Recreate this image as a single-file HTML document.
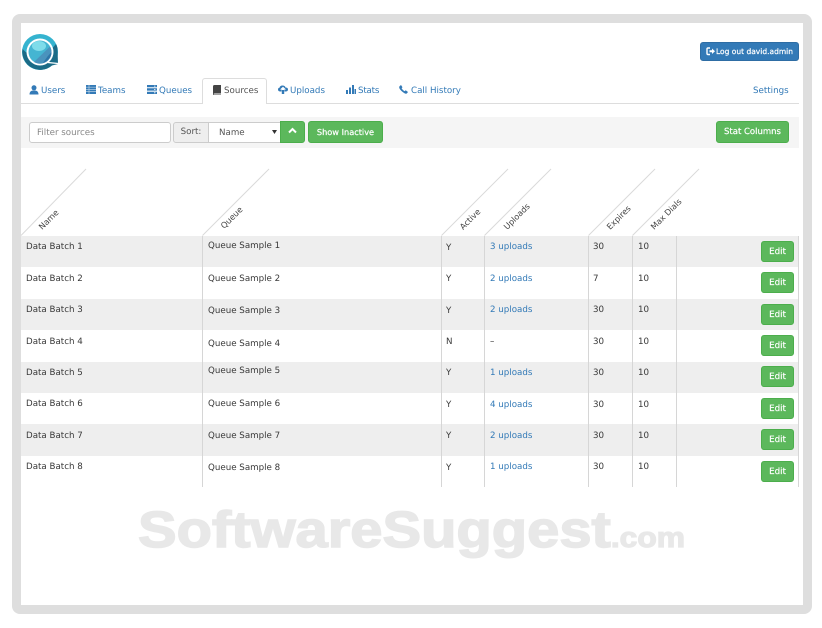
<!DOCTYPE html>
<html><head><meta charset="utf-8"><style>
html,body{margin:0;padding:0;background:#fff}
body{width:822px;height:628px;position:relative;overflow:hidden;font-family:"DejaVu Sans","Liberation Sans",sans-serif;font-size:8.7px;color:#3a3a3a;text-rendering:geometricPrecision}
.a,.t,.n,.l,.b,.h{position:absolute}
.t,.n,.l,.h{white-space:nowrap;line-height:12px;margin-top:1px}
.n,.l{color:#337ab7}
.b{background:#5cb85c;border:1px solid #4cae4c;border-radius:3px;color:#fff;box-sizing:border-box;text-align:center;font-weight:400}
.g{-webkit-text-stroke:.2px #fff;font-size:8.2px;line-height:20px}
.e{left:761px;width:33px;height:21px;line-height:20px;-webkit-text-stroke:.15px #fff}
.r{position:absolute;left:21px;width:778px;background:#eee}
.v{position:absolute;top:236px;width:1px;height:251px;background:#d6d6d6}
.h{transform:rotate(-45deg);transform-origin:left center;color:#444;font-size:8.2px;margin-top:0}
svg{position:absolute;overflow:visible}
</style></head><body>
<div class="a" style="left:12px;top:14px;width:800px;height:600px;background:#dedede;border-radius:8px"></div>
<div class="a" style="left:21px;top:23px;width:782px;height:582px;background:#fff"></div>

<svg style="left:22px;top:34px" width="37" height="37" viewBox="0 0 37 37">
<circle cx="18" cy="18" r="18" fill="#35b3cf"/>
<path d="M0.500 15A18 18 0 0 0 30 31.500L36 30L35.500 14A18 18 0 0 0 34 10L27 18Q10 26 0.500 15Z" fill="#1b6b87"/>
<circle cx="18" cy="18" r="13.500" fill="#fff"/>
<circle cx="18" cy="18" r="11.500" fill="#45b5d2"/>
<path d="M28 12.500A11.500 11.500 0 0 1 12 28Z" fill="#4a93bd"/>
<path d="M29.500 18A11.500 11.500 0 0 1 21 29L25.500 22.500Z" fill="#2f76a8"/>
<ellipse cx="17" cy="12" rx="7" ry="5" fill="#7fdcea"/>
<path d="M26 28.500L36 29.500" stroke="#fff" stroke-width="1.200"/>
</svg>

<div class="b" style="left:700px;top:42px;width:99px;height:19px;background:#337ab7;border-color:#2e6da4"></div>
<div class="a" style="left:716px;top:45px;font-size:7.5px;line-height:13px;color:#fff;-webkit-text-stroke:.2px #fff;white-space:nowrap">Log out david.admin</div>
<svg style="left:706px;top:47px" width="9" height="9" viewBox="0 0 9 9"><path d="M4 1H2Q1 1 1 2V6.500Q1 7.500 2 7.500H4" fill="none" stroke="#fff" stroke-width="1.400"/><path d="M3.500 3.300H6V1.500L9 4.300L6 7V5.300H3.500Z" fill="#fff"/></svg>

<div class="a" style="left:21px;top:103px;width:778px;height:1px;background:#ddd"></div>
<div class="a" style="left:202px;top:78px;width:65px;height:26px;background:#fff;border:1px solid #ddd;border-bottom:0;border-radius:3px 3px 0 0;box-sizing:border-box"></div>

<svg style="left:29px;top:85px" width="10" height="10" viewBox="0 0 10 10"><circle cx="5" cy="2.800" r="2.500" fill="#337ab7"/><path d="M0.500 9.500Q0.500 6 3.500 5.500H6.500Q9.500 6 9.500 9.500Z" fill="#337ab7"/></svg>
<div class="n" style="left:41px;top:84px">Users</div>
<svg style="left:86px;top:85px" width="10" height="9" viewBox="0 0 10 9"><path d="M0 0H10V9H0Z" fill="#337ab7"/><path d="M0 2.200H10M0 4.400H10M0 6.600H10M3 0V9" stroke="#b5cee3" stroke-width=".7"/></svg>
<div class="n" style="left:98px;top:84px">Teams</div>
<svg style="left:147px;top:85px" width="10" height="9" viewBox="0 0 10 9"><path d="M0 0H10V2.300H0ZM0 3.300H10V5.600H0ZM0 6.700H10V9H0Z" fill="#337ab7"/><path d="M7 1.100H8.500M7 4.400H8.500M7 7.800H8.500" stroke="#fff" stroke-width=".8"/></svg>
<div class="n" style="left:159px;top:84px">Queues</div>
<svg style="left:213px;top:85px" width="8" height="10" viewBox="0 0 8 10"><path d="M1.500 0H8V8.500H1.500Q.5 8.500.5 9.500H8V10H0V1.500Q0 0 1.500 0Z" fill="#444"/></svg>
<div class="t" style="left:224px;top:84px;color:#555">Sources</div>
<svg style="left:278px;top:85px" width="10" height="9" viewBox="0 0 10 9"><path d="M2.500 6.500Q0 6.500 0 4.500Q0 3 1.500 2.800Q2 .5 4.500 .5Q7 .5 7.500 2.500Q10 2.500 10 4.500Q10 6.500 7.500 6.500H6.500V4.500H8L5 1.800L2 4.500H3.500V6.500ZM3.800 5H6.200V9H3.800Z" fill="#337ab7"/></svg>
<div class="n" style="left:290px;top:84px">Uploads</div>
<svg style="left:346px;top:85px" width="10" height="9" viewBox="0 0 10 9"><path d="M0 5H2V9H0ZM3 2.500H5V9H3ZM6 0H8V9H6ZM8.500 4H10V9H8.500Z" fill="#337ab7"/></svg>
<div class="n" style="left:358px;top:84px;letter-spacing:-.2px">Stats</div>
<svg style="left:399px;top:85px" width="9" height="9" viewBox="0 0 9 9"><path d="M.5 1.200L2 0L3.500 2.200L2.600 3.200Q3.500 5 5.600 6.200L6.700 5.300L9 7L7.800 8.500Q6.500 9.300 4 7.300Q1 5 .3 3Q0 2 .5 1.200Z" fill="#337ab7"/></svg>
<div class="n" style="left:411px;top:84px">Call History</div>
<div class="n" style="left:753px;top:84px">Settings</div>

<div class="a" style="left:21px;top:117px;width:778px;height:31px;background:#f5f5f5"></div>
<div class="a" style="left:29px;top:122px;width:142px;height:21px;background:#fff;border:1px solid #ccc;border-radius:3px;box-sizing:border-box;color:#888;line-height:20px;padding-left:7px">Filter sources</div>
<div class="a" style="left:173px;top:122px;width:36px;height:21px;background:#eee;border:1px solid #ccc;border-radius:3px 0 0 3px;box-sizing:border-box;color:#555;line-height:18px;text-align:center">Sort:</div>
<div class="a" style="left:208px;top:122px;width:73px;height:21px;background:#fff;border:1px solid #ccc;box-sizing:border-box;color:#555;line-height:21px;padding-left:10px">Name</div>
<svg style="left:272px;top:130px" width="5" height="4" viewBox="0 0 5 4"><path d="M0 0H5L2.500 4Z" fill="#333"/></svg>
<div class="b" style="left:280px;top:121px;width:25px;height:22px;border-radius:0 3px 3px 0"></div>
<svg style="left:288px;top:127px" width="9" height="7" viewBox="0 0 9 7"><path d="M1 5.500L4.500 2L8 5.500" fill="none" stroke="#fff" stroke-width="2"/></svg>
<div class="b g" style="left:308px;top:121px;width:75px;height:22px">Show Inactive</div>
<div class="b g" style="left:716px;top:121px;width:73px;height:22px;font-size:8.5px">Stat Columns</div>

<svg style="left:0;top:0" width="822" height="628"><path d="M21 235.500L86 169M202.500 235.500L269 169M441.500 235.500L508 169M484.500 235.500L551 169M588.500 235.500L655 169M632.500 235.500L699 169" stroke="#dadada" stroke-width="1" fill="none"/></svg>
<div class="h" style="left:40px;top:222px">Name</div>
<div class="h" style="left:222px;top:221px">Queue</div>
<div class="h" style="left:461px;top:222px">Active</div>
<div class="h" style="left:505px;top:222px">Uploads</div>
<div class="h" style="left:608px;top:222px">Expires</div>
<div class="h" style="left:652px;top:222px">Max Dials</div>

<div class="r" style="top:236px;height:31px"></div>
<div class="r" style="top:299px;height:31px"></div>
<div class="r" style="top:362px;height:31px"></div>
<div class="r" style="top:424px;height:32px"></div>
<div class="v" style="left:202px"></div><div class="v" style="left:441px"></div><div class="v" style="left:484px"></div><div class="v" style="left:588px"></div><div class="v" style="left:632px"></div><div class="v" style="left:676px"></div><div class="v" style="left:798px"></div>

<div class="t" style="left:26px;top:240px">Data Batch 1</div><div class="t" style="left:208px;top:239px">Queue Sample 1</div><div class="t" style="left:446px;top:241px">Y</div><div class="l" style="left:490px;top:240px">3 uploads</div><div class="t" style="left:593px;top:240px">30</div><div class="t" style="left:638px;top:240px">10</div>
<div class="t" style="left:26px;top:272px">Data Batch 2</div><div class="t" style="left:208px;top:272px">Queue Sample 2</div><div class="t" style="left:446px;top:272px">Y</div><div class="l" style="left:490px;top:272px">2 uploads</div><div class="t" style="left:593px;top:272px">7</div><div class="t" style="left:638px;top:272px">10</div>
<div class="t" style="left:26px;top:303px">Data Batch 3</div><div class="t" style="left:208px;top:304px">Queue Sample 3</div><div class="t" style="left:446px;top:304px">Y</div><div class="l" style="left:490px;top:303px">2 uploads</div><div class="t" style="left:593px;top:303px">30</div><div class="t" style="left:638px;top:303px">10</div>
<div class="t" style="left:26px;top:335px">Data Batch 4</div><div class="t" style="left:208px;top:337px">Queue Sample 4</div><div class="t" style="left:446px;top:335px">N</div><div class="t" style="left:490px;top:335px">–</div><div class="t" style="left:593px;top:335px">30</div><div class="t" style="left:638px;top:335px">10</div>
<div class="t" style="left:26px;top:366px">Data Batch 5</div><div class="t" style="left:208px;top:364px">Queue Sample 5</div><div class="t" style="left:446px;top:366px">Y</div><div class="l" style="left:490px;top:366px">1 uploads</div><div class="t" style="left:593px;top:366px">30</div><div class="t" style="left:638px;top:366px">10</div>
<div class="t" style="left:26px;top:397px">Data Batch 6</div><div class="t" style="left:208px;top:397px">Queue Sample 6</div><div class="t" style="left:446px;top:398px">Y</div><div class="l" style="left:490px;top:398px">4 uploads</div><div class="t" style="left:593px;top:398px">30</div><div class="t" style="left:638px;top:398px">10</div>
<div class="t" style="left:26px;top:429px">Data Batch 7</div><div class="t" style="left:208px;top:429px">Queue Sample 7</div><div class="t" style="left:446px;top:429px">Y</div><div class="l" style="left:490px;top:429px">2 uploads</div><div class="t" style="left:593px;top:429px">30</div><div class="t" style="left:638px;top:429px">10</div>
<div class="t" style="left:26px;top:460px">Data Batch 8</div><div class="t" style="left:208px;top:461px">Queue Sample 8</div><div class="t" style="left:446px;top:461px">Y</div><div class="l" style="left:490px;top:460px">1 uploads</div><div class="t" style="left:593px;top:460px">30</div><div class="t" style="left:638px;top:460px">10</div>

<div class="b e" style="top:241px">Edit</div>
<div class="b e" style="top:272px">Edit</div>
<div class="b e" style="top:304px">Edit</div>
<div class="b e" style="top:335px">Edit</div>
<div class="b e" style="top:366px">Edit</div>
<div class="b e" style="top:398px">Edit</div>
<div class="b e" style="top:429px">Edit</div>
<div class="b e" style="top:461px">Edit</div>

<div class="a" style="left:138px;top:500px;font-family:'Liberation Sans',sans-serif;font-weight:700;font-size:51px;line-height:60px;color:#e8e8e8;white-space:nowrap;-webkit-text-stroke:1.5px #e8e8e8;transform:scaleX(1.135);transform-origin:left top">SoftwareSuggest<span style="font-size:28px;-webkit-text-stroke:1.2px #e8e8e8">.com</span></div>
</body></html>
